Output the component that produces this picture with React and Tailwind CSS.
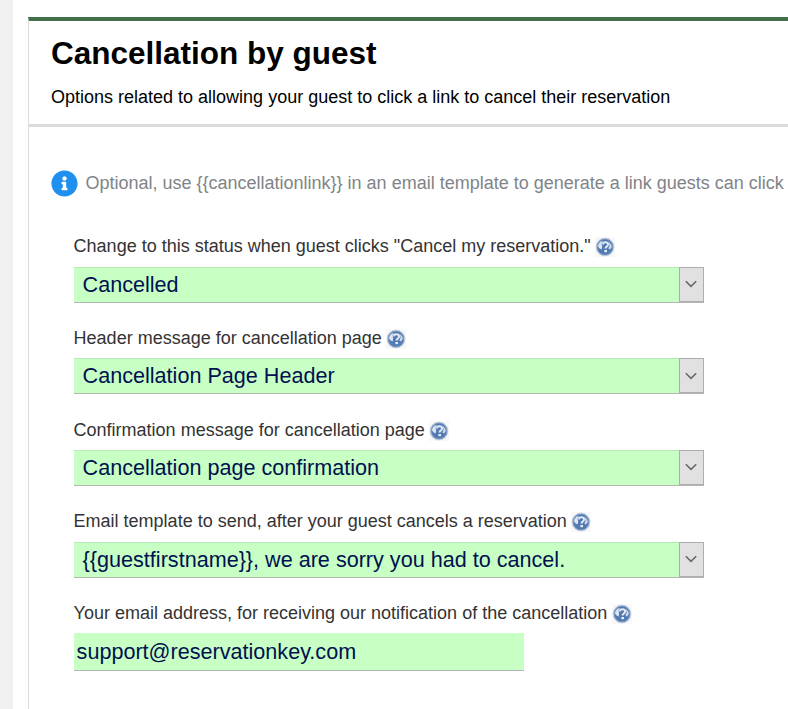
import React from 'react';
import { FaInfoCircle } from 'react-icons/fa';

const selects = [
  { label: 'Change to this status when guest clicks "Cancel my reservation."', value: 'Cancelled' },
  { label: 'Header message for cancellation page', value: 'Cancellation Page Header' },
  { label: 'Confirmation message for cancellation page', value: 'Cancellation page confirmation' },
  { label: 'Email template to send, after your guest cancels a reservation', value: '{{guestfirstname}}, we are sorry you had to cancel.' },
];

function HelpIcon() {
  return (
    <svg className="ml-[4.4px] mt-[2px] h-5 w-5 shrink-0" viewBox="0 0 20 20" fill="none">
      <rect width="20" height="20" fill="#f8f8f8" />
      <circle cx="10" cy="10" r="8.9" fill="#7f9bc4" stroke="#c3cede" strokeWidth="1" />
      <circle cx="10" cy="10" r="7.4" fill="#527ab2" />
      <path d="M3.4 7.2 5.6 4.6 8 4.2 6.6 6.6 7.2 9.4 6.6 12.6 4.6 11.6 3 9.6z" fill="#dbe4f0" />
      <path d="M13.6 4.8 16.2 7.4 16.8 10 15 12.4 13.4 11.6 14.6 8.4z" fill="#d0dcec" />
      <path d="M7.8 7.4C8 6 8.8 5.2 10.3 5.2c1.7 0 2.8.8 2.8 2.3 0 1.9-2.6 2-2.6 4" stroke="#e4ebf5" strokeWidth="1.9" />
      <rect x="9.4" y="13" width="2.6" height="2.2" fill="#e4ebf5" />
    </svg>
  );
}

function Label({ children }) {
  return (
    <div className="flex h-[24.7px] items-center pt-[0.7px] text-[18px] leading-6 text-[#333]">
      <span className="whitespace-nowrap">{children}</span>
      <HelpIcon />
    </div>
  );
}

function SelectField({ label, value }) {
  return (
    <div className="h-[91.7px]">
      <Label>{label}</Label>
      <div className="mt-[8.3px] flex h-9 w-[630px] border-t border-b border-t-[#b9eab5] border-b-[#b5b5b5] bg-[#c8ffc4]">
        <span className="flex-1 whitespace-nowrap pl-[9px] text-[21.6px] leading-[34px] text-[#00114f]">{value}</span>
        <span className="-mt-px flex h-[35px] w-[25px] items-center justify-center border border-[#adadad] bg-[#e1e1e1]">
          <svg className="h-[8px] w-[12px]" viewBox="0 0 12 8" fill="none" stroke="#686868" strokeWidth="1.6">
            <path d="M.8 1.2 6 6.4l5.2-5.2" />
          </svg>
        </span>
      </div>
    </div>
  );
}

export default function App() {
  return (
    <div className="flex h-[709px] w-[788px] overflow-hidden bg-white font-['Liberation_Sans',Arial,sans-serif]">
      <div className="w-[13px] shrink-0 bg-[#f0f0f0]" />
      <main className="ml-[15px] mt-[17px] flex-1 overflow-hidden border-t-4 border-l border-t-[#41704a] border-l-[#dcdcdc]">
        <header className="h-[106px] border-b-3 border-[#dcdcdc] pl-[22px] text-black">
          <h1 className="pt-[12px] text-[31.5px] leading-10 font-bold whitespace-nowrap">Cancellation by guest</h1>
          <p className="mt-[12px] text-[18px] leading-6 whitespace-nowrap">
            Options related to allowing your guest to click a link to cancel their reservation
          </p>
        </header>
        <div className="mt-[42px] flex h-7 items-center pl-[22px] text-[18px] text-[#808488]">
          <FaInfoCircle className="mr-[7.4px] size-[27px] shrink-0 text-[#2090f0]" />
          <span className="whitespace-nowrap">
            Optional, use {'{{cancellationlink}}'} in an email template to generate a link guests can click
          </span>
        </div>
        <form className="mt-[36.6px] pl-[44.6px]">
          {selects.map(field => (
            <SelectField key={field.label} label={field.label} value={field.value} />
          ))}
          <Label>Your email address, for receiving our notification of the cancellation</Label>
          <div className="mt-[8.3px] h-[38px] w-[450px] border-b border-[#b5b5b5] bg-[#c8ffc4] pl-[3px] text-[21.6px] leading-[37px] text-[#00114f]">
            support@reservationkey.com
          </div>
        </form>
      </main>
    </div>
  );
}
